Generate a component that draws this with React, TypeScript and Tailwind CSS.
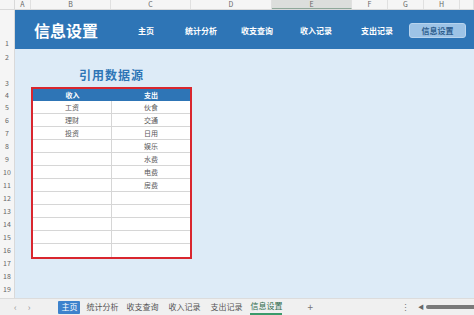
import React from "react";

const cols = [
  { l: "A", w: 16 },
  { l: "B", w: 80 },
  { l: "C", w: 80 },
  { l: "D", w: 81 },
  { l: "E", w: 80, sel: true },
  { l: "F", w: 36 },
  { l: "G", w: 36 },
  { l: "H", w: 36 },
  { l: "", w: 14 },
];

const rowLabels: { n: number; h: number; bottom?: boolean }[] = [
  { n: 1, h: 39, bottom: true },
  { n: 2, h: 16 },
  { n: 3, h: 24, bottom: true },
  { n: 4, h: 12 },
  ...Array.from({ length: 15 }, (_, i) => ({ n: i + 5, h: 13 })),
];

const income = ["工资", "理财", "投资"];
const expense = ["伙食", "交通", "日用", "娱乐", "水费", "电费", "房费"];

export default function App() {
  const font = { fontFamily: '"Noto Sans CJK SC", "Noto Sans", sans-serif' };
  return (
    <div className="w-[474px] h-[315px] flex flex-col overflow-hidden bg-white" style={font}>
      {/* column header */}
      <div className="flex h-[10px] bg-[#f5f5f5] border-b border-[#d9d9d9] shrink-0">
        <div className="w-[15px] shrink-0 border-r border-[#d9d9d9]" />
        {cols.map((c, i) => (
          <div
            key={i}
            style={{ width: c.w }}
            className={
              "shrink-0 flex items-center justify-center text-[7px] leading-none text-[#666] border-r border-[#e0e0e0] " +
              (c.sel ? "bg-[#dcdedc] border-b border-b-[#8fa89a]" : "")
            }
          >
            {c.l}
          </div>
        ))}
      </div>

      <div className="flex flex-1 min-h-0">
        {/* row numbers */}
        <div className="w-[15px] shrink-0 flex flex-col bg-[#f5f5f5] border-r border-[#d9d9d9]">
          {rowLabels.map((r) => (
            <div
              key={r.n}
              style={{ height: r.h }}
              className={
                "shrink-0 flex justify-center text-[7px] leading-none text-[#666] " +
                (r.bottom ? "items-end pb-[2px]" : "items-center")
              }
            >
              {r.n}
            </div>
          ))}
        </div>

        {/* sheet area */}
        <div className="flex-1 flex flex-col bg-[#ddebf7]">
          {/* banner */}
          <div className="h-[39px] shrink-0 bg-[#2e75b6] flex items-center pl-[19px]">
            <div className="text-[16px] font-bold text-white leading-none tracking-[0px]">信息设置</div>
            <div className="ml-[40px] text-[8px] font-bold text-white leading-none mt-[2px]">主页</div>
            <div className="ml-[31px] text-[8px] font-bold text-white leading-none mt-[2px]">统计分析</div>
            <div className="ml-[24px] text-[8px] font-bold text-white leading-none mt-[2px]">收支查询</div>
            <div className="ml-[27px] text-[8px] font-bold text-white leading-none mt-[2px]">收入记录</div>
            <div className="ml-[29px] text-[8px] font-bold text-white leading-none mt-[2px]">支出记录</div>
            <div className="ml-[16px] mt-[2px] w-[57px] h-[15px] rounded-[3px] bg-[#9dc3e6] border border-[#b8d4ee] flex items-center justify-center text-[8px] font-bold text-[#2f5f8f] leading-none">
              信息设置
            </div>
          </div>

          {/* title */}
          <div className="h-[38px] shrink-0 pl-[16px] flex items-end">
            <div className="w-[161px] flex justify-center pb-[6px] text-[12px] font-bold text-[#2e75b6] leading-none tracking-[1px]">
              引用数据源
            </div>
          </div>

          {/* table */}
          <div className="pl-[16px]">
            <div className="w-[161px] border-2 border-[#d9262e] bg-white">
              <div className="flex h-[12px] bg-[#2e75b6] text-white text-[7px] font-bold leading-none">
                <div className="w-[79px] flex items-center justify-center">收入</div>
                <div className="flex-1 flex items-center justify-center">支出</div>
              </div>
              {Array.from({ length: 12 }, (_, i) => (
                <div
                  key={i}
                  className={
                    "flex h-[13px] text-[7px] text-[#595959] leading-none " +
                    (i < 11 ? "border-b border-[#d6d6d6]" : "")
                  }
                >
                  <div className="w-[79px] flex items-center justify-center border-r border-[#d6d6d6]">
                    {income[i] ?? ""}
                  </div>
                  <div className="flex-1 flex items-center justify-center">{expense[i] ?? ""}</div>
                </div>
              ))}
            </div>
          </div>
        </div>
      </div>

      {/* tab bar */}
      <div className="h-[17px] shrink-0 bg-[#f0f0f0] border-t border-[#dcdcdc] flex items-center text-[8px] text-[#555] leading-none">
        <div className="ml-[14px] text-[9px] text-[#999]">‹</div>
        <div className="ml-[11px] text-[9px] text-[#999]">›</div>
        <div className="ml-[28px] h-[13px] px-[3px] bg-[#3d82cc] text-white flex items-center rounded-[1px]">主页</div>
        <div className="ml-[6px]">统计分析</div>
        <div className="ml-[8px]">收支查询</div>
        <div className="ml-[10px]">收入记录</div>
        <div className="ml-[10px]">支出记录</div>
        <div className="ml-[8px] h-[15px] flex items-center border-b-2 border-[#3b9a6b] text-[#2e6b4d]">信息设置</div>
        <div className="ml-[25px] text-[10px] text-[#777]">+</div>
        <div className="ml-[88px] text-[9px] text-[#777]">⋮</div>
        <div className="ml-[8px] text-[6px] text-[#666]">◀</div>
        <div className="ml-[2px] flex-1 h-[4px] bg-[#7a7a7a] rounded-l-[2px]" />
      </div>
    </div>
  );
}
